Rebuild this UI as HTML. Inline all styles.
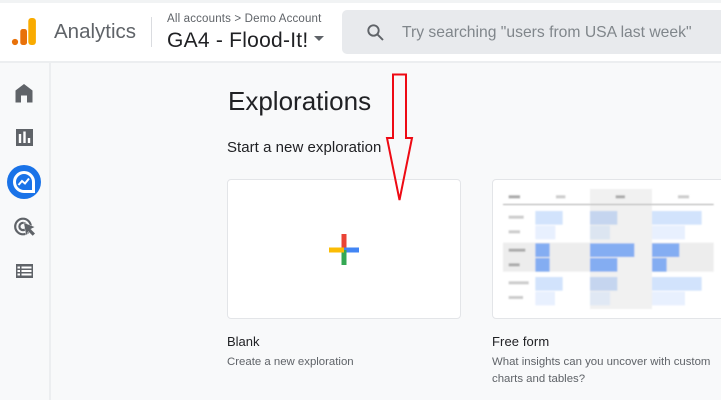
<!DOCTYPE html>
<html><head><meta charset="utf-8">
<style>
html,body{margin:0;padding:0;width:721px;height:400px;overflow:hidden;background:#f8f9fa;font-family:"Liberation Sans",sans-serif}
.t{position:absolute;white-space:nowrap;line-height:1}
.b{position:absolute}
</style></head>
<body>
<div class="b" style="left:0;top:0;width:721px;height:3px;background:#f1f3f4"></div>
<div class="b" style="left:0;top:3px;width:721px;height:58px;background:#fff"></div>
<div class="b" style="left:0;top:61px;width:721px;height:2px;background:#eceef0"></div>
<div class="b" style="left:49px;top:63px;width:2px;height:337px;background:#eceef0"></div>

<svg class="b" style="left:0;top:0" width="50" height="60">
<circle cx="15" cy="42" r="3.1" fill="#e8710a"/>
<rect x="20.3" y="29" width="6.7" height="16" rx="2.4" fill="#e8710a"/>
<rect x="28.3" y="18" width="7.6" height="27" rx="3" fill="#f9ab00"/>
</svg>
<div class="t" style="left:54px;top:22px;font-size:20.5px;color:#5f6368">Analytics</div>
<div class="b" style="left:151px;top:17px;width:1px;height:30px;background:#dadce0"></div>
<div class="t" style="left:167px;top:14px;font-size:11.5px;letter-spacing:.17px;color:#5f6368">All accounts &gt; Demo Account</div>
<div class="t" style="left:167px;top:30px;font-size:21px;letter-spacing:.25px;color:#202124">GA4 - Flood-It!</div>
<svg class="b" style="left:314px;top:36px" width="11" height="6"><path d="M0 0h10L5 5z" fill="#5f6368"/></svg>

<div class="b" style="left:342px;top:10px;width:385px;height:44px;background:#e8eaed;border-radius:5px"></div>
<svg class="b" style="left:365px;top:22px" width="20" height="20" fill="none" stroke="#5f6368" stroke-width="1.9"><circle cx="8.5" cy="8.5" r="5.2"/><path d="M12.3 12.3L18 18"/></svg>
<div class="t" style="left:402px;top:25px;font-size:15.7px;color:#80868b">Try searching "users from USA last week"</div>

<svg class="b" style="left:0;top:63px" width="49" height="230">
<path d="M24 21l8.5 6.500v12h-5.500v-7h-6v7h-5.500v-12z" fill="#5f6368"/>
<rect x="16" y="66" width="17" height="17" fill="#5f6368"/>
<path d="M18.800 71h2.400v9h-2.400zM23.300 68.500h2.400v11.500h-2.400zM27.800 75h2.400v5h-2.400z" fill="#fff"/>
<circle cx="24" cy="119" r="17" fill="#1a73e8"/>
<path d="M24 109.500a9.500 9.500 0 0 1 9.500 9.500v9.500H24a9.500 9.500 0 0 1 0-19z" fill="none" stroke="#fff" stroke-width="3"/>
<path d="M18.500 122l3.500-4 3 2.500 4-5" fill="none" stroke="#fff" stroke-width="2"/>
<g fill="none" stroke="#5f6368" stroke-width="2.200">
<circle cx="23" cy="163.500" r="7.800"/>
<circle cx="23" cy="163.500" r="3.600"/>
</g>
<path d="M24 160l10.500 4-4 2 4.500 4.500-2.300 2.300-4.500-4.500-2 4z" fill="#5f6368" stroke="#f8f9fa" stroke-width=".8" paint-order="stroke"/>
<rect x="16" y="201" width="17" height="14" fill="#5f6368"/>
<path d="M17.500 203.500h2.500v2h-2.500zM21.500 203.500h10v2h-10zM17.500 207h2.500v2h-2.500zM21.500 207h10v2h-10zM17.500 210.500h2.500v2h-2.500zM21.500 210.500h10v2h-10z" fill="#fff"/>
</svg>

<div class="t" style="left:228px;top:88px;font-size:26px;color:#202124">Explorations</div>
<div class="t" style="left:227px;top:140px;font-size:15px;letter-spacing:.04px;color:#202124">Start a new exploration</div>

<div class="b" style="left:227px;top:179px;width:232px;height:138px;background:#fff;border:1px solid #e3e5e8;border-radius:4px"></div>
<svg class="b" style="left:325px;top:231px" width="38" height="38">
<rect x="16.500" y="3" width="5" height="16" fill="#ea4335"/>
<rect x="19" y="16.500" width="15" height="5" fill="#4285f4"/>
<rect x="16.500" y="19" width="5" height="15" fill="#34a853"/>
<rect x="4" y="16.500" width="15" height="5" fill="#fbbc04"/>
</svg>

<div class="b" style="left:492px;top:179px;width:240px;height:138px;background:#fff;border:1px solid #e3e5e8;border-radius:4px"></div>
<svg class="b" style="left:490px;top:175px" width="231" height="150" viewBox="0 0 693 450">
<defs><filter id="f" x="-5%" y="-5%" width="110%" height="110%"><feGaussianBlur stdDeviation="2"/></filter></defs>
<g filter="url(#f)">
<rect x="39" y="203" width="632" height="87" fill="#ededed"/>
<rect x="300" y="42" width="186" height="360" fill="#f1f1f1"/>
<rect x="39" y="87" width="632" height="3" fill="#a9a9a9"/>
<g fill="#bdbdbd">
<rect x="56" y="61" width="34" height="9" fill="#aaa"/><rect x="198" y="61" width="28" height="9" fill="#ccc"/><rect x="377" y="61" width="28" height="9" fill="#aaa"/><rect x="564" y="61" width="33" height="9" fill="#ccc"/>
<rect x="56" y="122" width="45" height="9" fill="#ccc"/><rect x="56" y="166" width="34" height="9" fill="#ccc"/>
<rect x="56" y="221" width="50" height="9" fill="#aaa"/><rect x="56" y="265" width="33" height="9" fill="#aaa"/>
<rect x="56" y="319" width="60" height="9" fill="#ccc"/><rect x="56" y="363" width="43" height="9" fill="#ccc"/>
</g>
<g fill="#d2e3fc">
<rect x="136" y="108" width="82" height="41"/><rect x="486" y="108" width="149" height="41"/>
<rect x="136" y="306" width="82" height="41"/><rect x="486" y="306" width="149" height="41"/>
</g>
<g fill="#e8f0fe">
<rect x="136" y="152" width="60" height="41"/><rect x="486" y="152" width="99" height="41"/>
<rect x="136" y="350" width="59" height="41"/><rect x="486" y="350" width="99" height="41"/>
</g>
<rect x="300" y="108" width="82" height="41" fill="#c5d5ef"/><rect x="300" y="306" width="82" height="41" fill="#c5d5ef"/>
<rect x="300" y="152" width="60" height="41" fill="#dce5f1"/><rect x="300" y="350" width="60" height="41" fill="#e0e8f4"/>
<g fill="#84adf2">
<rect x="136" y="205" width="43" height="41"/><rect x="300" y="205" width="133" height="41"/><rect x="486" y="205" width="82" height="41"/>
<rect x="136" y="249" width="43" height="41"/><rect x="300" y="249" width="82" height="41"/><rect x="486" y="249" width="44" height="41"/>
</g>
</g>
</svg>

<svg class="b" style="left:380px;top:65px" width="40" height="145">
<path d="M13 9.500H26V73H32L19.500 135L7 73H13z" fill="none" stroke="#ee0a14" stroke-width="2"/>
</svg>

<div class="t" style="left:227px;top:335px;font-size:13px;color:#202124">Blank</div>
<div class="t" style="left:227px;top:357px;font-size:11.4px;color:#5f6368">Create a new exploration</div>
<div class="t" style="left:492px;top:335px;font-size:13px;letter-spacing:.1px;color:#202124">Free form</div>
<div class="t" style="left:492px;top:357px;font-size:11.4px;color:#5f6368">What insights can you uncover with custom</div>
<div class="t" style="left:492px;top:374px;font-size:11.4px;color:#5f6368">charts and tables?</div>
</body></html>
